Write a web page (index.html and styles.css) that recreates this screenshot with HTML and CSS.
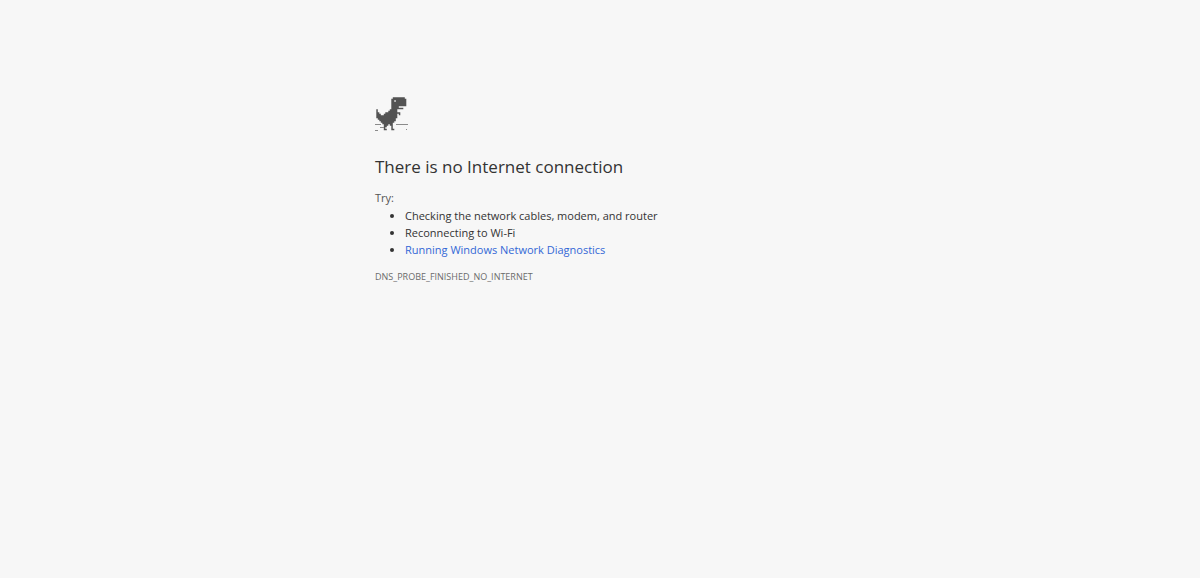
FILE: index.html
```html
<!DOCTYPE html>
<html lang="en">
<head>
<meta charset="utf-8">
<meta name="viewport" content="width=device-width, initial-scale=1">
<title>There is no Internet connection</title>
<link rel="stylesheet" href="styles.css">
</head>
<body>
<main class="error-page">
  <svg class="dino" viewBox="0 0 34 36" aria-hidden="true">
    <g transform="translate(1.3 1.3) scale(1.5)" fill="#535353">
      <path fill-rule="evenodd" d="M11 0H19V1H20V6H15V7H18V8H14V10H16V12H15V11H14V14H13V16H12V17H11V18H11V20H11V21H12V22H10V19H9V18H8V19H7V20H6V21H7V22H5V18H4V17H3V16H2V15H1V14H0V8H1V10H2V11H3V12H5V11H6V10H8V9H9V8H10V1H11ZM12 2V3H13V2Z"/>
    </g>
    <path fill="#8b8b8b" d="M0 28h6v1H0zM21 28h12v1H21zM5 31h4v1H5zM0 34h3v1H0zM31 33h1v1h-1z"/>
  </svg>
  <h1 class="title">There is no Internet connection</h1>
  <p class="hint">Try:</p>
  <ul class="suggestions">
    <li>Checking the network cables, modem, and router</li>
    <li>Reconnecting to Wi-Fi</li>
    <li><a class="link" href="#diagnose">Running Windows Network Diagnostics</a></li>
  </ul>
  <p class="code">DNS_PROBE_FINISHED_NO_INTERNET</p>
</main>
</body>
</html>
```
FILE: styles.css
```css
body {
  margin: 0;
  background: #f7f7f7;
  color: #333;
  font: 11px/17px "Open Sans", "Noto Sans", sans-serif;
}
.error-page {
  box-sizing: border-box;
  max-width: 450px;
  margin: 0 auto;
  padding-top: 96px;
}
.dino {
  display: block;
  width: 34px;
  height: 36px;
}
.title {
  margin: 24px 0 11px;
  font-size: 17px;
  line-height: 22px;
  font-weight: 400;
}
.hint {
  margin: 0;
  color: #555;
}
.suggestions {
  margin: 1px 0 0;
  padding-left: 30px;
}
.link {
  color: #3367d6;
  text-decoration: none;
}
.code {
  margin: 10px 0 0;
  color: #6b6b6b;
  font-size: 9px;
}
```
